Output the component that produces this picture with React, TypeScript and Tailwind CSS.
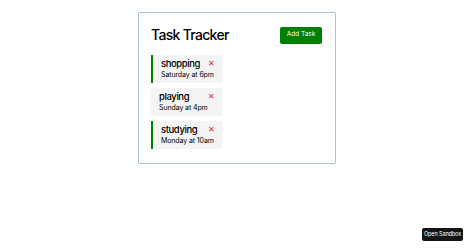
import { useState } from "react";

type Task = { id: number; text: string; day: string; reminder: boolean };

const initial: Task[] = [
  { id: 1, text: "shopping", day: "Saturday at 6pm", reminder: true },
  { id: 2, text: "playing", day: "Sunday at 4pm", reminder: false },
  { id: 3, text: "studying", day: "Monday at 10am", reminder: true },
];

export default function App() {
  const [tasks, setTasks] = useState(initial);

  return (
    <div className="relative h-[248px] w-[474px] bg-white pt-3 font-['Inter',sans-serif] text-black">
      <div className="mx-auto h-[152px] w-[198px] rounded-[2px] border border-[#adc4d8] px-3 pt-[12px]">
        <header className="mb-[10px] flex items-center justify-between">
          <h1 className="text-[14px] font-medium leading-[20px] tracking-[-0.7px]">Task Tracker</h1>
          <button className="mr-[1px] h-[17px] w-[42px] rounded-[2px] bg-[#008000] text-[6.5px] text-white">
            Add Task
          </button>
        </header>

        <div className="flex flex-col gap-[5px]">
          {tasks.map((t) => (
            <div
              key={t.id}
              className={`flex h-[28px] w-[71px] flex-col justify-center bg-[#f4f4f4] ${
                t.reminder ? "border-l-2 border-[#008000] pl-[8px]" : "pl-[8px]"
              }`}
            >
              <div className="flex items-center justify-between pr-[7px]">
                <span className="text-[9.5px] font-medium leading-[12px] tracking-[-0.4px]">{t.text}</span>
                <span
                  className="cursor-pointer text-[7.5px] leading-[12px] text-[#e0283c]"
                  onClick={() => setTasks(tasks.filter((x) => x.id !== t.id))}
                >
                  ✕
                </span>
              </div>
              <p className="text-[7px] leading-[10px] tracking-[-0.1px]">{t.day}</p>
            </div>
          ))}
        </div>
      </div>

      <button className="absolute bottom-[7px] right-[11px] h-[13px] w-[41px] rounded-[2px] bg-[#151515] text-[5.5px] tracking-[-0.1px] text-white">
        Open Sandbox
      </button>
    </div>
  );
}
